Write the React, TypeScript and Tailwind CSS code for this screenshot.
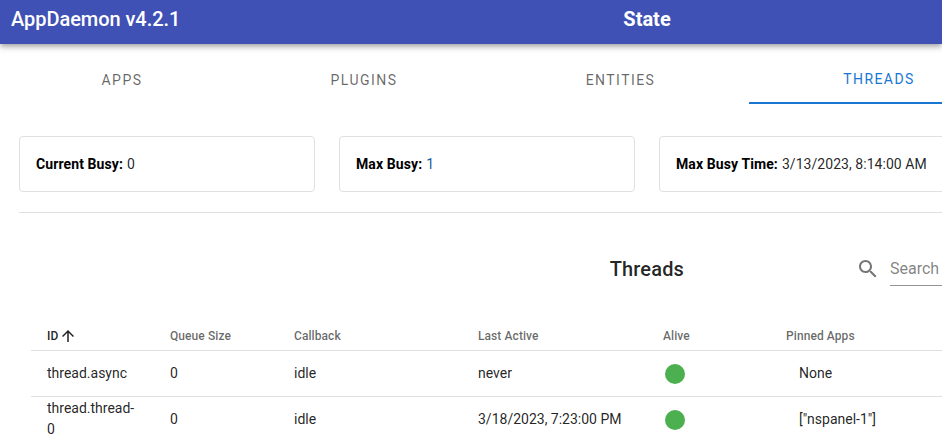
import React from "react";

const tabs = [
  { label: "APPS", cls: "w-[244px] text-black/60" },
  { label: "PLUGINS", cls: "w-[240px] text-black/60" },
  { label: "ENTITIES", cls: "w-[265px] pl-[8px] text-black/60" },
  { label: "THREADS", cls: "w-[260px] text-[#1976d2] border-b-2 border-[#1976d2]" },
];

const cards: [string, string, string][] = [
  ["Current Busy:", "0", "text-black/87"],
  ["Max Busy:", "1", "text-[#1a5a96]"],
  ["Max Busy Time:", "3/13/2023, 8:14:00 AM", "text-black/87"],
];

const heads = ["Queue Size", "Callback", "Last Active", "Alive", "Pinned Apps"];

const rows = [
  { id: "thread.async", q: "0", cb: "idle", last: "never", pinned: "None" },
  { id: "thread.thread-0", q: "0", cb: "idle", last: "3/18/2023, 7:23:00 PM", pinned: '["nspanel-1"]' },
];

export default function App() {
  return (
    <div className="w-[942px] h-[440px] overflow-hidden bg-white font-['Roboto',sans-serif] text-[14px] text-black/87">
      <header className="relative z-10 h-[44px] bg-[#3f51b5] text-white flex items-center shadow-[0_2px_4px_-1px_rgba(0,0,0,0.2),0_4px_5px_0_rgba(0,0,0,0.14),0_1px_10px_0_rgba(0,0,0,0.12)]">
        <div className="w-[647px] pl-[11px] text-[20px] font-medium mt-[-7px] shrink-0 tracking-[-0.05px]">AppDaemon v4.2.1</div>
        <div className="w-0 flex justify-center text-[20px] font-bold mt-[-7px]">
          <span className="whitespace-nowrap">State</span>
        </div>
      </header>

      <nav className="flex w-[1009px] h-[60px]">
        {tabs.map((t) => (
          <div
            key={t.label}
            className={`${t.cls} shrink-0 h-[60px] pt-[12px] flex items-center justify-center text-[14px] font-normal tracking-[1.45px]`}
          >
            {t.label}
          </div>
        ))}
      </nav>

      <section className="flex gap-[24px] pl-[19px] pt-[32px] w-[1300px]">
        {cards.map(([k, v, c]) => (
          <div
            key={k}
            className="w-[296px] h-[56px] shrink-0 border border-[#e0e0e0] rounded-[4px] flex items-center pl-[16px] whitespace-nowrap"
          >
            <span className="font-bold text-black tracking-[0.1px]">{k}</span>
            <span className={`ml-[4px] tracking-[0.05px] ${c}`}>{v}</span>
          </div>
        ))}
      </section>

      <hr className="mt-[20px] ml-[19px] border-t border-[#e0e0e0]" />

      <div className="flex items-center h-[40px] mt-[36px]">
        <div className="w-[647px] shrink-0 flex justify-end">
          <h2 className="translate-x-[37px] text-[20px] font-medium tracking-[0.15px] text-black/87 whitespace-nowrap">Threads</h2>
        </div>
        <svg className="ml-[209px] w-[24px] h-[24px] fill-black/54 shrink-0" viewBox="0 0 24 24">
          <path d="M15.5 14h-.79l-.28-.27C15.41 12.59 16 11.11 16 9.5 16 5.91 13.09 3 9.5 3S3 5.91 3 9.5 5.91 16 9.5 16c1.61 0 3.09-.59 4.23-1.57l.27.28v.79l5 4.99L20.49 19l-4.99-5zm-6 0C7.01 14 5 11.99 5 9.5S7.01 5 9.5 5 14 7.01 14 9.5 11.99 14 9.5 14z" />
        </svg>
        <div className="ml-[10px] flex-1 h-[33px] mt-[1px] border-b border-black/42 text-[16px] leading-[32px] text-black/50">Search</div>
      </div>

      <table className="ml-[31px] mt-[26px] w-[911px] table-fixed border-collapse">
        <thead>
          <tr className="h-[35px] border-b border-[#e0e0e0] text-[12px] font-medium tracking-[0.08px] text-black/60 text-left">
            <th className="w-[123px] pl-[16px] pt-[8px] font-medium text-black/87">
              <span className="inline-flex items-center">
                ID
                <svg className="ml-[1px] w-[18px] h-[18px] fill-black/87" viewBox="0 0 24 24">
                  <path d="M4 12l1.41 1.41L11 7.83V20h2V7.83l5.58 5.59L20 12l-8-8-8 8z" />
                </svg>
              </span>
            </th>
            {heads.map((h, i) => (
              <th
                key={h}
                className={`${["w-[124px]", "w-[184px]", "w-[185px]", "w-[123px]", ""][i]} pl-[16px] pt-[8px] font-medium`}
              >
                {h}
              </th>
            ))}
          </tr>
        </thead>
        <tbody>
          {rows.map((r) => (
            <tr key={r.id} className="h-[46px] border-b border-[#e0e0e0] text-[14px] leading-[20px]">
              <td className="pl-[16px] pr-[16px] leading-[21px] [overflow-wrap:anywhere]">{r.id}</td>
              <td className="pl-[16px]">{r.q}</td>
              <td className="pl-[16px]">{r.cb}</td>
              <td className="pl-[16px]">{r.last}</td>
              <td className="pl-[18px]">
                <div className="mt-[2px] w-[20px] h-[20px] rounded-full bg-[#4caf50]" />
              </td>
              <td className="pl-[29px]">{r.pinned}</td>
            </tr>
          ))}
        </tbody>
      </table>
    </div>
  );
}
